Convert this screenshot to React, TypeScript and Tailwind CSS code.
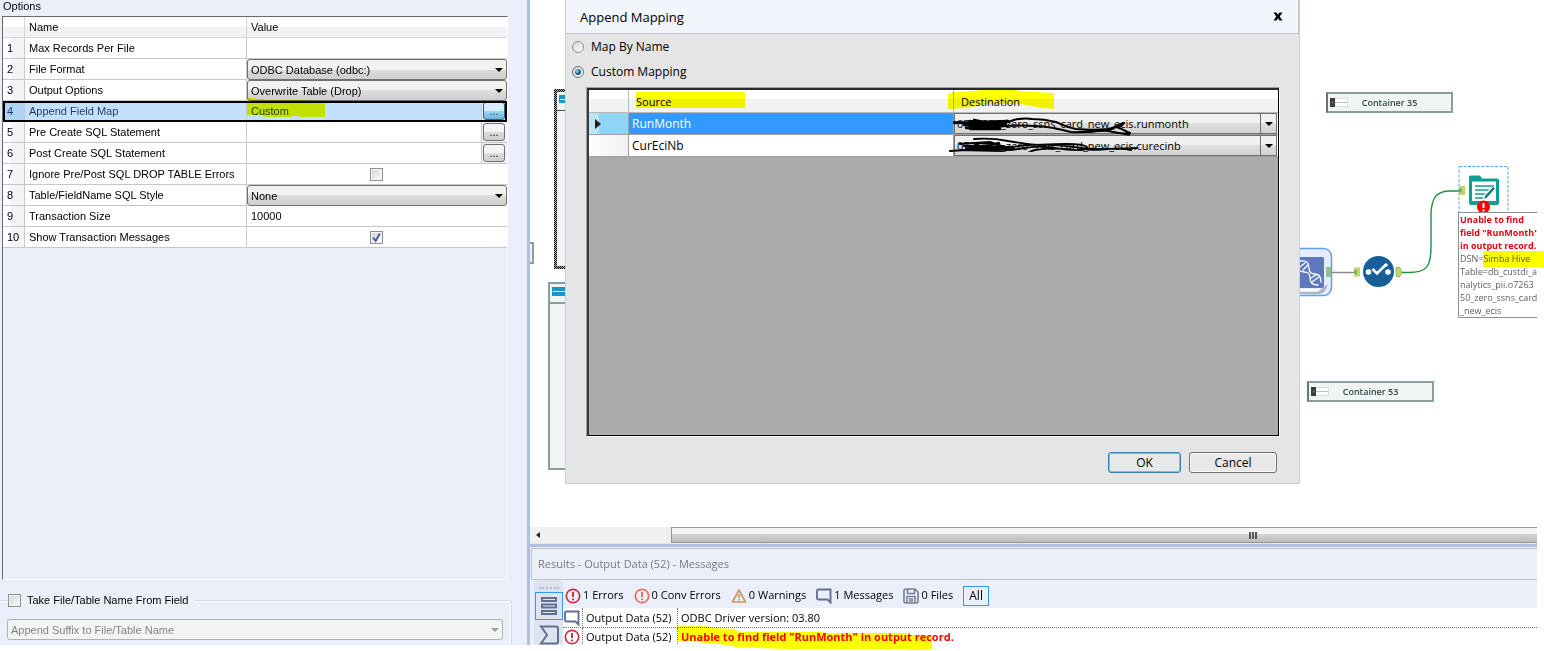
import React, { useState } from 'react';

type OptionRow = {
  name: string;
  kind: 'text' | 'select' | 'browse' | 'check';
  value?: string;
  checked?: boolean;
};

const options: OptionRow[] = [
  { name: 'Max Records Per File', kind: 'text', value: '' },
  { name: 'File Format', kind: 'select', value: 'ODBC Database (odbc:)' },
  { name: 'Output Options', kind: 'select', value: 'Overwrite Table (Drop)' },
  { name: 'Append Field Map', kind: 'browse', value: 'Custom' },
  { name: 'Pre Create SQL Statement', kind: 'browse', value: '' },
  { name: 'Post Create SQL Statement', kind: 'browse', value: '' },
  { name: 'Ignore Pre/Post SQL DROP TABLE Errors', kind: 'check', checked: false },
  { name: 'Table/FieldName SQL Style', kind: 'select', value: 'None' },
  { name: 'Transaction Size', kind: 'text', value: '10000' },
  { name: 'Show Transaction Messages', kind: 'check', checked: true },
];

const mappings = [
  { source: 'RunMonth', destination: '0726350_zero_ssns_card_new_ecis.runmonth' },
  { source: 'CurEciNb', destination: '0726350_zero_ssns_card_new_ecis.curecinb' },
];

const Caret = ({ className = '' }: { className?: string }) => (
  <svg viewBox="0 0 8 4" className={`pointer-events-none absolute h-1 w-2 ${className}`}>
    <path d="M0 0h8L4 4z" fill="currentColor" />
  </svg>
);

const CheckBox = ({ label, id, initial }: { label?: string; id: string; initial: boolean }) => {
  const [checked, setChecked] = useState(initial);
  return (
    <span className="relative block h-[13px] w-[13px] shrink-0">
      <input
        id={id}
        type="checkbox"
        aria-label={label}
        checked={checked}
        onChange={(e) => setChecked(e.target.checked)}
        className="block h-[13px] w-[13px] appearance-none border border-[#8e8f8f] bg-linear-to-br from-[#cfd3d8] to-white shadow-[inset_0_0_0_1px_#f4f4f4]"
      />
      {checked && (
        <svg viewBox="0 0 13 13" className="pointer-events-none absolute inset-0 h-[13px] w-[13px]">
          <path d="M3 6.5l2.6 3.4L9.8 2.6" fill="none" stroke="#4b5fa8" strokeWidth="2" />
        </svg>
      )}
    </span>
  );
};

const OptionValue = ({ row, index }: { row: OptionRow; index: number }) => {
  const selected = index === 3;

  if (row.kind === 'select') {
    return (
      <div className="relative">
        <select
          aria-label={row.name}
          defaultValue={row.value}
          className="block h-[21px] w-full appearance-none rounded-[3px] border border-[#707070] bg-linear-to-b from-[#f2f2f2] from-50% via-[#dddddd] via-50% to-[#cfcfcf] pl-[3px] text-[11px] text-black"
        >
          <option>{row.value}</option>
        </select>
        <Caret className="right-1 top-[9px]" />
      </div>
    );
  }

  if (row.kind === 'check') {
    return (
      <div className="flex justify-center pr-px">
        <CheckBox id={`option-${index}`} label={row.name} initial={!!row.checked} />
      </div>
    );
  }

  if (row.kind === 'browse') {
    return (
      <div className="flex h-5 items-center">
        <span className="flex-1 pl-1">{row.value}</span>
        <span className="flex h-full items-center border-l border-[#c8c8c8] bg-[#eef0fa] pl-px pr-[2px]">
          <button
            aria-label={`Edit ${row.name}`}
            className={
              selected
                ? 'h-[18px] w-[22px] rounded-[3px] border border-[#2c628b] bg-linear-to-b from-[#d9eefa] from-50% via-[#a6d8f0] via-50% to-[#68b3db] leading-[14px]'
                : 'h-[18px] w-[22px] rounded-[3px] border border-[#707070] bg-linear-to-b from-[#f4f4f4] from-50% via-[#dddddd] via-50% to-[#cfcfcf] leading-[14px]'
            }
          >
            ...
          </button>
        </span>
      </div>
    );
  }

  return <span className="block pl-1">{row.value}</span>;
};

const OptionsPanel = () => (
  <section className="flex w-[527px] shrink-0 flex-col overflow-hidden bg-[#ebeff9] font-['Liberation_Sans',sans-serif] text-[11px] leading-4">
    <h2 className="h-4 pl-[3px] leading-3">Options</h2>

    <div className="relative ml-[2px] mr-[19px] flex-1 border border-b-white border-l-[#696969] border-r-white border-t-[#696969]">
      <table className="w-full table-fixed border-separate border-spacing-0 bg-white text-left">
        <colgroup>
          <col className="w-[22px]" />
          <col className="w-[222px]" />
          <col />
        </colgroup>
        <thead>
          <tr className="h-[21px] bg-linear-to-b from-white from-50% to-[#f1f2f4] to-50%">
            <th className="border-b border-r border-[#d5d5d5] p-0" />
            <th className="border-b border-r border-[#d5d5d5] p-0 pl-1 font-normal">Name</th>
            <th className="border-b border-[#d5d5d5] p-0 pl-1 font-normal">Value</th>
          </tr>
        </thead>
        <tbody>
          {options.map((row, i) => (
            <tr
              key={row.name}
              className={
                i === 3
                  ? 'h-[21px] bg-[#c4e0ff] text-[#1e395b] outline-2 -outline-offset-2 outline-black'
                  : 'h-[21px]'
              }
            >
              <td
                className={
                  i === 3
                    ? 'border-b border-r border-[#c8c8c8] bg-[#b0d2f5] p-0 pl-1'
                    : 'border-b border-r border-[#c8c8c8] bg-linear-to-r from-white from-40% to-[#f3f4f6] to-40% p-0 pl-1'
                }
              >
                {i + 1}
              </td>
              <td className="whitespace-nowrap border-b border-r border-[#c8c8c8] p-0 pl-1">{row.name}</td>
              <td className={row.kind === 'select' ? 'p-0' : 'border-b border-[#c8c8c8] p-0'}>
                <OptionValue row={row} index={i} />
              </td>
            </tr>
          ))}
        </tbody>
      </table>
      {/* highlighter stroke over "Custom" */}
      <svg
        viewBox="0 0 78 19"
        className="pointer-events-none absolute left-[244px] top-[81px] h-[19px] w-[78px] mix-blend-multiply"
      >
        <path d="M0 0h8v1h9v1h52v3h9v14H52v-1h-7v1H16v-2H0z" fill="#ffff00" />
      </svg>
    </div>

    <fieldset className="mt-3 h-[53px] w-[512px] rounded-tr-sm border-r border-t border-[#d3d8e2] shadow-[inset_-1px_1px_0_#fff]">
      <legend className="ml-2 flex items-center gap-[6px] pr-[6px]">
        <CheckBox id="take-name" initial={false} />
        <label htmlFor="take-name">Take File/Table Name From Field</label>
      </legend>
      <div className="relative ml-[7px] mr-2 mt-[11px] text-[#838383]">
        <select
          disabled
          aria-label="File/Table name mode"
          className="block h-[21px] w-full appearance-none rounded-[3px] border border-[#adb2b5] bg-[#f4f4f4] pl-[3px] text-[11px]"
        >
          <option>Append Suffix to File/Table Name</option>
        </select>
        <Caret className="right-1 top-[9px] text-[#a0a0a0]" />
      </div>
    </fieldset>
  </section>
);

const CollapsedContainer = ({ label, className }: { label: string; className: string }) => (
  <div
    className={`absolute flex h-[21px] w-[127px] items-center border-2 border-[#8a9f9c] border-l-[#5d7773] bg-[#f0f4f5] ${className}`}
  >
    <svg viewBox="0 0 18 9" className="ml-[2px] h-[9px] w-[18px]">
      <rect x="4" y="0.5" width="13.5" height="8" fill="#fff" stroke="#dedede" />
      <path d="M4 4.5h13" stroke="#bfbfbf" />
      <rect width="5" height="9" fill="#3c3c3c" />
      <path d="M2 3l1.5 1.5L2 6z" fill="#888" />
    </svg>
    <span className="flex-1 pr-5 text-center text-[9px] font-semibold text-[#2f4a49]">{label}</span>
  </div>
);

const Workflow = () => (
  <svg viewBox="0 0 230 150" className="absolute left-[760px] top-[160px] h-[150px] w-[230px]">
    {/* connections */}
    <path d="M42 112.5h24" stroke="#8a8a8a" strokeWidth="1.4" />
    <path
      d="M110 112.5h9c17 0 22-5 22-26V56c0-19 6-25 19-25h10"
      fill="none"
      stroke="#1f9140"
      strokeWidth="1.4"
    />

    {/* dna tool */}
    <rect x="-10" y="88.5" width="51.5" height="47" rx="8" fill="#e3edfb" stroke="#62a0f0" strokeWidth="1.5" />
    <path d="M10 132h18l9-8v3q-2 7-9 7H10z" fill="#a9b4c6" />
    <path d="M10 130h17l9-7" stroke="#fff" strokeWidth="1.5" fill="none" />
    <rect x="0" y="97" width="34" height="31" rx="2" fill="#5e78be" />
    <path d="M36 107h5v10h-5z" fill="#8fbf9a" />
    <g fill="none" stroke="#fff" strokeWidth="1.3" strokeLinecap="round">
      <path d="M8 103c-1 7 2 9 6 9 5 0 6 2 6 6 0 5 3 7 8 7" />
      <path d="M10 101c7-1 9 2 9 7 0 4 2 6 6 6 4 0 6 3 6 8" />
      <path d="M10 107l5-4M13 110l5-5M21 118l5-3M22 122l7-5" />
    </g>

    {/* select tool */}
    <path d="M64 107.5h6v9h-6z" fill="#b9d968" />
    <path d="M64 110h3v4h-3z" fill="#8ab044" />
    <path d="M106 107.5h4l2 4.5-2 4.5h-4z" fill="#b9d968" stroke="#94b84e" strokeWidth="0.8" />
    <circle cx="88.5" cy="111.5" r="15.5" fill="#175f98" />
    <g fill="#fff">
      <circle cx="78.5" cy="112" r="2.8" />
      <circle cx="98" cy="112" r="2.8" />
      <circle cx="96" cy="105" r="1.8" />
    </g>
    <path d="M82.5 109l4.500 4.500 8.500-8.500" fill="none" stroke="#fff" strokeWidth="2.6" />

    {/* output data tool */}
    <rect x="169" y="6.5" width="49" height="60" fill="none" stroke="#5aa5ee" strokeDasharray="3 1.5" />
    <path d="M169 26h6v9h-6z" fill="#b9d968" />
    <path d="M169 28.5h3v4h-3z" fill="#8ab044" />
    <path
      d="M181 15.5h9l2 3h15a2 2 0 0 1 2 2V43a2 2 0 0 1-2 2h-26a2 2 0 0 1-2-2V17.500a2 2 0 0 1 2-2z"
      fill="#0da08e"
    />
    <path d="M182 21.5h24v19.500h-24z" fill="#fff" />
    <path d="M185 26h19M185 30h16M185 34h11M185 38h8" stroke="#0da08e" strokeWidth="1.6" />
    <path d="M194 38l9-10" stroke="#fff" strokeWidth="4" />
    <path d="M194 39l1-3 8-9 2 1.500-8 9z" fill="#0b7f72" />
    <circle cx="193.5" cy="47" r="6.5" fill="#ff0000" />
    <path d="M193.5 43v5M193.5 49.5v2" stroke="#fff" strokeWidth="2" />
  </svg>
);

const Canvas = () => (
  <div className="relative flex-1">
    <div className="absolute left-0 top-[242px] h-[22px] w-1 border-2 border-l-0 border-[#8a9f9c] bg-[#f0f4f5]" />

    {/* selected container, drawn with a checkered frame */}
    <div className="absolute left-[24px] top-[89px] h-[180px] w-20 bg-[repeating-conic-gradient(#000_0_25%,#a8b0b0_0_50%)] bg-[length:2px_2px] p-[3px]">
      <div className="h-full bg-[#f0f4f5]">
        <div className="flex h-[19px] items-start border-b border-[#3d5560] pl-[2px] pt-[3px]">
          <span className="flex h-2 w-6 items-center bg-[#1c94c9] pl-px">
            <span className="h-px w-full bg-white" />
          </span>
        </div>
      </div>
    </div>
    <div className="absolute left-[18px] top-[282px] h-[188px] w-20 border-2 border-[#8a9f9c] bg-[#f0f4f5]">
      <div className="flex h-5 items-start border-b-2 border-[#8a9f9c] pl-[2px] pt-[3px]">
        <span className="flex h-[9px] w-6 items-center bg-[#1c94c9] pl-px">
          <span className="h-px w-full bg-white" />
        </span>
      </div>
    </div>

    <CollapsedContainer label="Container 35" className="left-[796px] top-[92px]" />
    <CollapsedContainer label="Container 53" className="left-[777px] top-[381px]" />

    <Workflow />

    {/* annotation below the output tool */}
    <div className="absolute left-[928px] top-[212px] h-[106px] w-[79px] overflow-hidden whitespace-nowrap border border-r-0 border-[#8e8e8e] bg-white pl-px text-[9px] leading-[13px]">
      <p className="font-bold text-[#f00010]">
        Unable to find
        <br />
        field "RunMonth"
        <br />
        in output record.
      </p>
      <p className="font-medium text-[#606060]">
        DSN=Simba Hive
        <br />
        Table=db_custdi_a
        <br />
        nalytics_pii.o7263
        <br />
        50_zero_ssns_card
        <br />
        _new_ecis
      </p>
    </div>
    <div className="pointer-events-none absolute left-[953px] top-[251px] h-4 w-[61px] bg-[#ffff00] mix-blend-multiply" />

    <AppendMappingDialog />
  </div>
);

const AppendMappingDialog = () => {
  const [mode, setMode] = useState('custom');
  const radioClass =
    "relative h-3 w-3 appearance-none rounded-full border border-[#8e8f8f] bg-linear-to-br from-[#d4d4d4] to-white checked:border-[#5f6f7c] checked:after:absolute checked:after:inset-[2px] checked:after:rounded-full checked:after:bg-[radial-gradient(circle_at_35%_35%,#8fd8f8,#12527d_60%)] checked:after:content-['']";

  return (
    <div
      role="dialog"
      aria-label="Append Mapping"
      className="absolute left-[35px] top-0 flex h-[484px] w-[735px] flex-col border border-t-0 border-[#c9d0e2] bg-[#e5e5e5] text-[12px] leading-4"
    >
      <header className="flex h-[34px] items-center justify-between border-b border-r border-[#c0c0c8] bg-[#f2f5fb] pl-[14px] pr-3">
        <h2 className="text-[13px]">Append Mapping</h2>
        <button aria-label="Close" className="flex h-4 w-4 items-center justify-center">
          <svg viewBox="0 0 10 9" className="h-[9px] w-[10px]">
            <path d="M.5.5h3L5 2.700 6.500.5h3L6.700 4.500l2.800 4h-3L5 6.300 3.500 8.500h-3l2.800-4z" fill="#000" />
          </svg>
        </button>
      </header>

      <div className="flex flex-col gap-[9px] pl-[6px] pt-[5px]">
        <label className="flex items-center gap-[7px]">
          <input
            type="radio"
            name="mapping"
            checked={mode === 'name'}
            onChange={() => setMode('name')}
            className={radioClass}
          />
          Map By Name
        </label>
        <label className="flex items-center gap-[7px]">
          <input
            type="radio"
            name="mapping"
            checked={mode === 'custom'}
            onChange={() => setMode('custom')}
            className={radioClass}
          />
          Custom Mapping
        </label>
      </div>

      <div className="relative ml-5 mr-[19px] mt-[7px] flex-1 border border-b-white border-l-[#a0a0a0] border-r-white border-t-[#a0a0a0] bg-[#ababab]">
        <div className="h-full border-2 border-b border-r border-black border-l-[#3a3a3a] border-t-[#2a2a2a]">
          <table className="w-full table-fixed border-separate border-spacing-0 bg-white text-left">
            <colgroup>
              <col className="w-10" />
              <col className="w-[325px]" />
              <col />
            </colgroup>
            <thead className="text-[11px]">
              <tr className="h-[23px] bg-linear-to-b from-white from-40% to-[#f1f2f4] to-40%">
                <th className="border-b border-r border-[#b8b8b8] p-0" />
                <th className="border-b border-r border-[#b8b8b8] p-0 pl-[7px] pt-[2px] font-normal">Source</th>
                <th className="border-b border-[#b8b8b8] p-0 pl-[7px] pt-[2px] font-normal">Destination</th>
              </tr>
            </thead>
            <tbody>
              {mappings.map((m, i) => (
                <tr key={m.source} className="h-[22px]">
                  <td
                    className={
                      i === 0
                        ? 'border-b border-r border-[#a0a0a0] bg-linear-to-r from-[#bfe4f7] from-25% to-[#8fd5f8] to-25% p-0 pl-[6px]'
                        : 'border-b border-r border-[#a0a0a0] bg-linear-to-r from-white to-[#f1f2f4] p-0'
                    }
                  >
                    {i === 0 && (
                      <svg viewBox="0 0 6 10" className="h-[10px] w-[6px]">
                        <path d="M0 0l6 5-6 5z" fill="#222" />
                      </svg>
                    )}
                  </td>
                  <td
                    className={
                      i === 0
                        ? 'border-b border-r border-[#a0a0a0] bg-[#3399ff] p-0 pl-[3px] text-white'
                        : 'border-b border-r border-[#a0a0a0] p-0 pl-[3px]'
                    }
                  >
                    {m.source}
                  </td>
                  <td className="border-b border-[#a0a0a0] p-0 pr-px">
                    <div className="relative">
                      <select
                        aria-label={`Destination for ${m.source}`}
                        defaultValue={m.destination}
                        className="block h-[21px] w-full appearance-none border border-[#707070] bg-linear-to-b from-[#f0f0f0] from-50% via-[#dfdfdf] via-50% to-[#d2d2d2] pl-[2px] text-[11px]"
                      >
                        <option>{m.destination}</option>
                      </select>
                      <span className="pointer-events-none absolute bottom-0 right-[16px] top-0 border-l border-[#707070]" />
                      <Caret className="right-1 top-[9px]" />
                    </div>
                  </td>
                </tr>
              ))}
            </tbody>
          </table>
        </div>

        {/* highlighter strokes on the column titles */}
        <svg
          viewBox="0 0 420 22"
          className="pointer-events-none absolute left-[49px] top-0 h-[22px] w-[420px] mix-blend-multiply"
        >
          <path d="M0 4h109v16H0z" fill="#ffff00" />
          <path
            d="M312 6l6-2 18-1 24-2h20l2 2 36 2v16l-12-1-22-4h-34l-20 4-18 1z"
            fill="#ffff00"
          />
        </svg>

        {/* pen strokes hiding part of the destination names */}
        <svg
          viewBox="0 0 200 46"
          className="pointer-events-none absolute left-[360px] top-[27px] h-[46px] w-[200px]"
          fill="none"
          stroke="#000"
          strokeLinecap="round"
          strokeLinejoin="round"
        >
          <path
            d="M7 8l54-2-44 4 42-1-40 4 38-2-34 3 30 0M23 6l34 5-30-6 26 8M26 13l26-6"
            strokeWidth="2.4"
          />
          <path
            d="M7 7c20 2 36 2 54 0 10-4 16-4 24-3 12 0 16 1 24 3 8 3 12 6 20 7 12 1 20 1 32 0 8-1 10-5 16-6-2 3-6 4-8 4 6 1 10 5 14 6-6 2-16-1-22-2-12-1-24 2-37 1-10-2-14-4-24-5-14-2-26-2-44-1"
            strokeWidth="2"
          />
          <path d="M162 16l20 4 1-2M132 17c12 1 30-2 38-5" strokeWidth="1.6" />
          <path
            d="M3 36l16-1 14-7 16 1-30 4 38-2-44 4 42 1-36-5 44 1-36 3 40-1M13 29l30-2 14 5-40-1M22 35l30-7"
            strokeWidth="2.2"
          />
          <path
            d="M27 24c14-1 24 0 34 2 14 2 20 4 34 4 14-1 28-2 40 0 8 2 6 4 0 5-14 1-24-2-36-3-16-2-30 4-42 3M60 33c24-5 50-4 74 0 20 2 36 1 56 0M136 34c16 3 30-3 48 1M84 36c10-3 30-3 44-1"
            strokeWidth="1.8"
          />
        </svg>
      </div>

      <footer className="flex justify-end gap-2 pb-[10px] pr-[22px] pt-[15px]">
        <button className="h-[21px] w-[73px] rounded-[3px] border border-[#3c7fb1] bg-[#e8e8e8] leading-[17px] shadow-[inset_0_0_0_1px_#5cc8f0]">
          OK
        </button>
        <button className="h-[21px] w-[88px] rounded-[3px] border border-[#707070] bg-[#e8e8e8] leading-[17px] shadow-[inset_0_0_0_1px_#fafafa]">
          Cancel
        </button>
      </footer>
    </div>
  );
};

const ErrorIcon = ({ color }: { color: string }) => (
  <svg viewBox="0 0 16 16" className="h-4 w-4 shrink-0" fill="none" stroke={color}>
    <circle cx="8" cy="8" r="6.7" strokeWidth="1.7" />
    <path d="M8 4v5M8 10.5v1.800" strokeWidth="2" />
  </svg>
);

const WarningIcon = () => (
  <svg viewBox="0 0 16 16" className="h-4 w-4 shrink-0" fill="none" stroke="#c9965e">
    <path d="M8 2L1.500 14h13z" strokeWidth="1.7" strokeLinejoin="round" />
    <path d="M8 6v4M8 11v1.500" strokeWidth="1.7" />
  </svg>
);

const MessageIcon = () => (
  <svg viewBox="0 0 16 16" className="h-4 w-4 shrink-0" fill="none" stroke="#64708f">
    <path d="M2.500 1.500h12v13l-3-3h-9a1.500 1.500 0 0 1-1.500-1.500V3a1.500 1.500 0 0 1 1.500-1.500z" strokeWidth="1.9" />
  </svg>
);

const FilesIcon = () => (
  <svg viewBox="0 0 16 16" className="h-4 w-4 shrink-0" fill="none" stroke="#75809a" strokeWidth="1.6">
    <path d="M1 3a2 2 0 0 1 2-2h9l3 3v9a2 2 0 0 1-2 2H3a2 2 0 0 1-2-2z" />
    <path d="M4.500 1v4.500h7V1M4 15V8.500h8V15M6 11h4M6 13h4" />
  </svg>
);

const filters = [
  { icon: <ErrorIcon color="#cc3344" />, label: '1 Errors' },
  { icon: <ErrorIcon color="#e5705c" />, label: '0 Conv Errors' },
  { icon: <WarningIcon />, label: '0 Warnings' },
  { icon: <MessageIcon />, label: '1 Messages' },
  { icon: <FilesIcon />, label: '0 Files' },
];

const ResultsPanel = () => (
  <section className="flex h-[98px] flex-col bg-[#ebeff9]">
    <h2 className="ml-px mt-px flex h-8 shrink-0 items-center border border-r-0 border-[#c3c3c3] pl-[6px] text-[11px] text-[#7c7c7c]">
      Results - Output Data (52) - Messages
    </h2>
    <div className="flex flex-1 overflow-hidden">
      <div className="ml-1 flex w-[29px] shrink-0 flex-col items-center rounded-t bg-[#dde4f1] pt-1">
        <div className="mb-[3px] mt-[3px] w-5 border-t-2 border-dotted border-[#b4bccb]" />
        <button
          aria-label="Messages"
          className="flex h-[28px] w-7 shrink-0 items-center justify-center border border-[#3399ff]"
        >
          <svg viewBox="0 0 18 20" className="h-5 w-[18px]" fill="none" stroke="#64708f" strokeWidth="2">
            <path d="M2 2h14v3H2zM2 8.500h14v3H2zM2 15h14v3H2z" />
          </svg>
        </button>
        <button aria-label="Metadata" className="flex w-7 shrink-0 justify-center pt-[5px]">
          <svg viewBox="0 0 20 20" className="h-5 w-5" fill="none" stroke="#64708f" strokeWidth="2">
            <path d="M2 1.500h15q2 0 2 2v13q0 2-2 2H2l6-8.500z" />
          </svg>
        </button>
      </div>

      <div className="flex-1">
        <div className="flex h-[28px] items-center gap-[10px] pl-[2px] pt-[3px] text-[11px]">
          {filters.map((f) => (
            <button key={f.label} className="flex items-center gap-[2px] whitespace-nowrap">
              {f.icon}
              {f.label}
            </button>
          ))}
          <button className="h-5 border border-[#3399ff] px-[5px] text-[12px] leading-4">All</button>
        </div>
        <table className="w-full table-fixed border-separate border-spacing-0 bg-white text-left text-[11px] leading-4">
          <colgroup>
            <col className="w-5" />
            <col className="w-[95px]" />
            <col />
          </colgroup>
          <tbody>
            <tr className="h-5">
              <td className="border-b border-r border-dotted border-[#777] p-0 pl-px">
                <MessageIcon />
              </td>
              <td className="border-b border-r border-dotted border-[#777] p-0 pl-[3px]">Output Data (52)</td>
              <td className="border-b border-dotted border-[#777] p-0 pl-[3px]">ODBC Driver version: 03.80</td>
            </tr>
            <tr className="h-[18px]">
              <td className="border-r border-dotted border-[#777] p-0 pl-px">
                <ErrorIcon color="#cc3344" />
              </td>
              <td className="border-r border-dotted border-[#777] p-0 pl-[3px]">Output Data (52)</td>
              <td className="p-0 pl-[3px] font-bold text-[#ff0000]">
                Unable to find field "RunMonth" in output record.
              </td>
            </tr>
          </tbody>
        </table>
      </div>
    </div>
  </section>
);

const App: React.FC = () => {
  return (
    <div className="flex h-screen overflow-hidden bg-white pb-[6px] pr-[7px] font-['Open_Sans','Noto_Sans',sans-serif] text-black">
      <OptionsPanel />
      <div className="w-[3px] shrink-0 bg-[#b0c0e0]" />
      <main className="relative flex min-w-0 flex-1 flex-col">
        <Canvas />

        <div className="flex h-4 items-center bg-[#f0f0f0]">
          <div className="w-[141px] pl-[6px]">
            <svg viewBox="0 0 4 6" className="h-[6px] w-1">
              <path d="M4 0v6L0 3z" fill="#222" />
            </svg>
          </div>
          <div className="flex h-4 flex-1 items-center border border-r-0 border-[#979797] bg-linear-to-b from-[#f4f4f4] from-40% via-[#d6d6d6] via-40% to-[#bcbcbc]">
            <span className="w-2/3" />
            <span className="h-[7px] w-[2px] bg-[#555]" />
            <span className="ml-px h-[7px] w-[2px] bg-[#555]" />
            <span className="ml-px h-[7px] w-[2px] bg-[#555]" />
          </div>
        </div>
        <div className="h-1 border-t border-[#e6e6e6] bg-[#b0c0e0]" />

        <ResultsPanel />
        {/* highlighter stroke over the error message */}
        <svg
          viewBox="0 0 256 26"
          className="pointer-events-none absolute -bottom-[6px] left-[147px] h-[26px] w-[256px] mix-blend-multiply"
        >
          <path
            d="M1 1h28l8 2 20 1 6 3h82l2 1h83v2h25v14l-8 1h-12l-6-1H110l-30-1-20-1-18-3-16-1-8-2H1z"
            fill="#ffff00"
          />
        </svg>
      </main>
    </div>
  );
};

export default App;
